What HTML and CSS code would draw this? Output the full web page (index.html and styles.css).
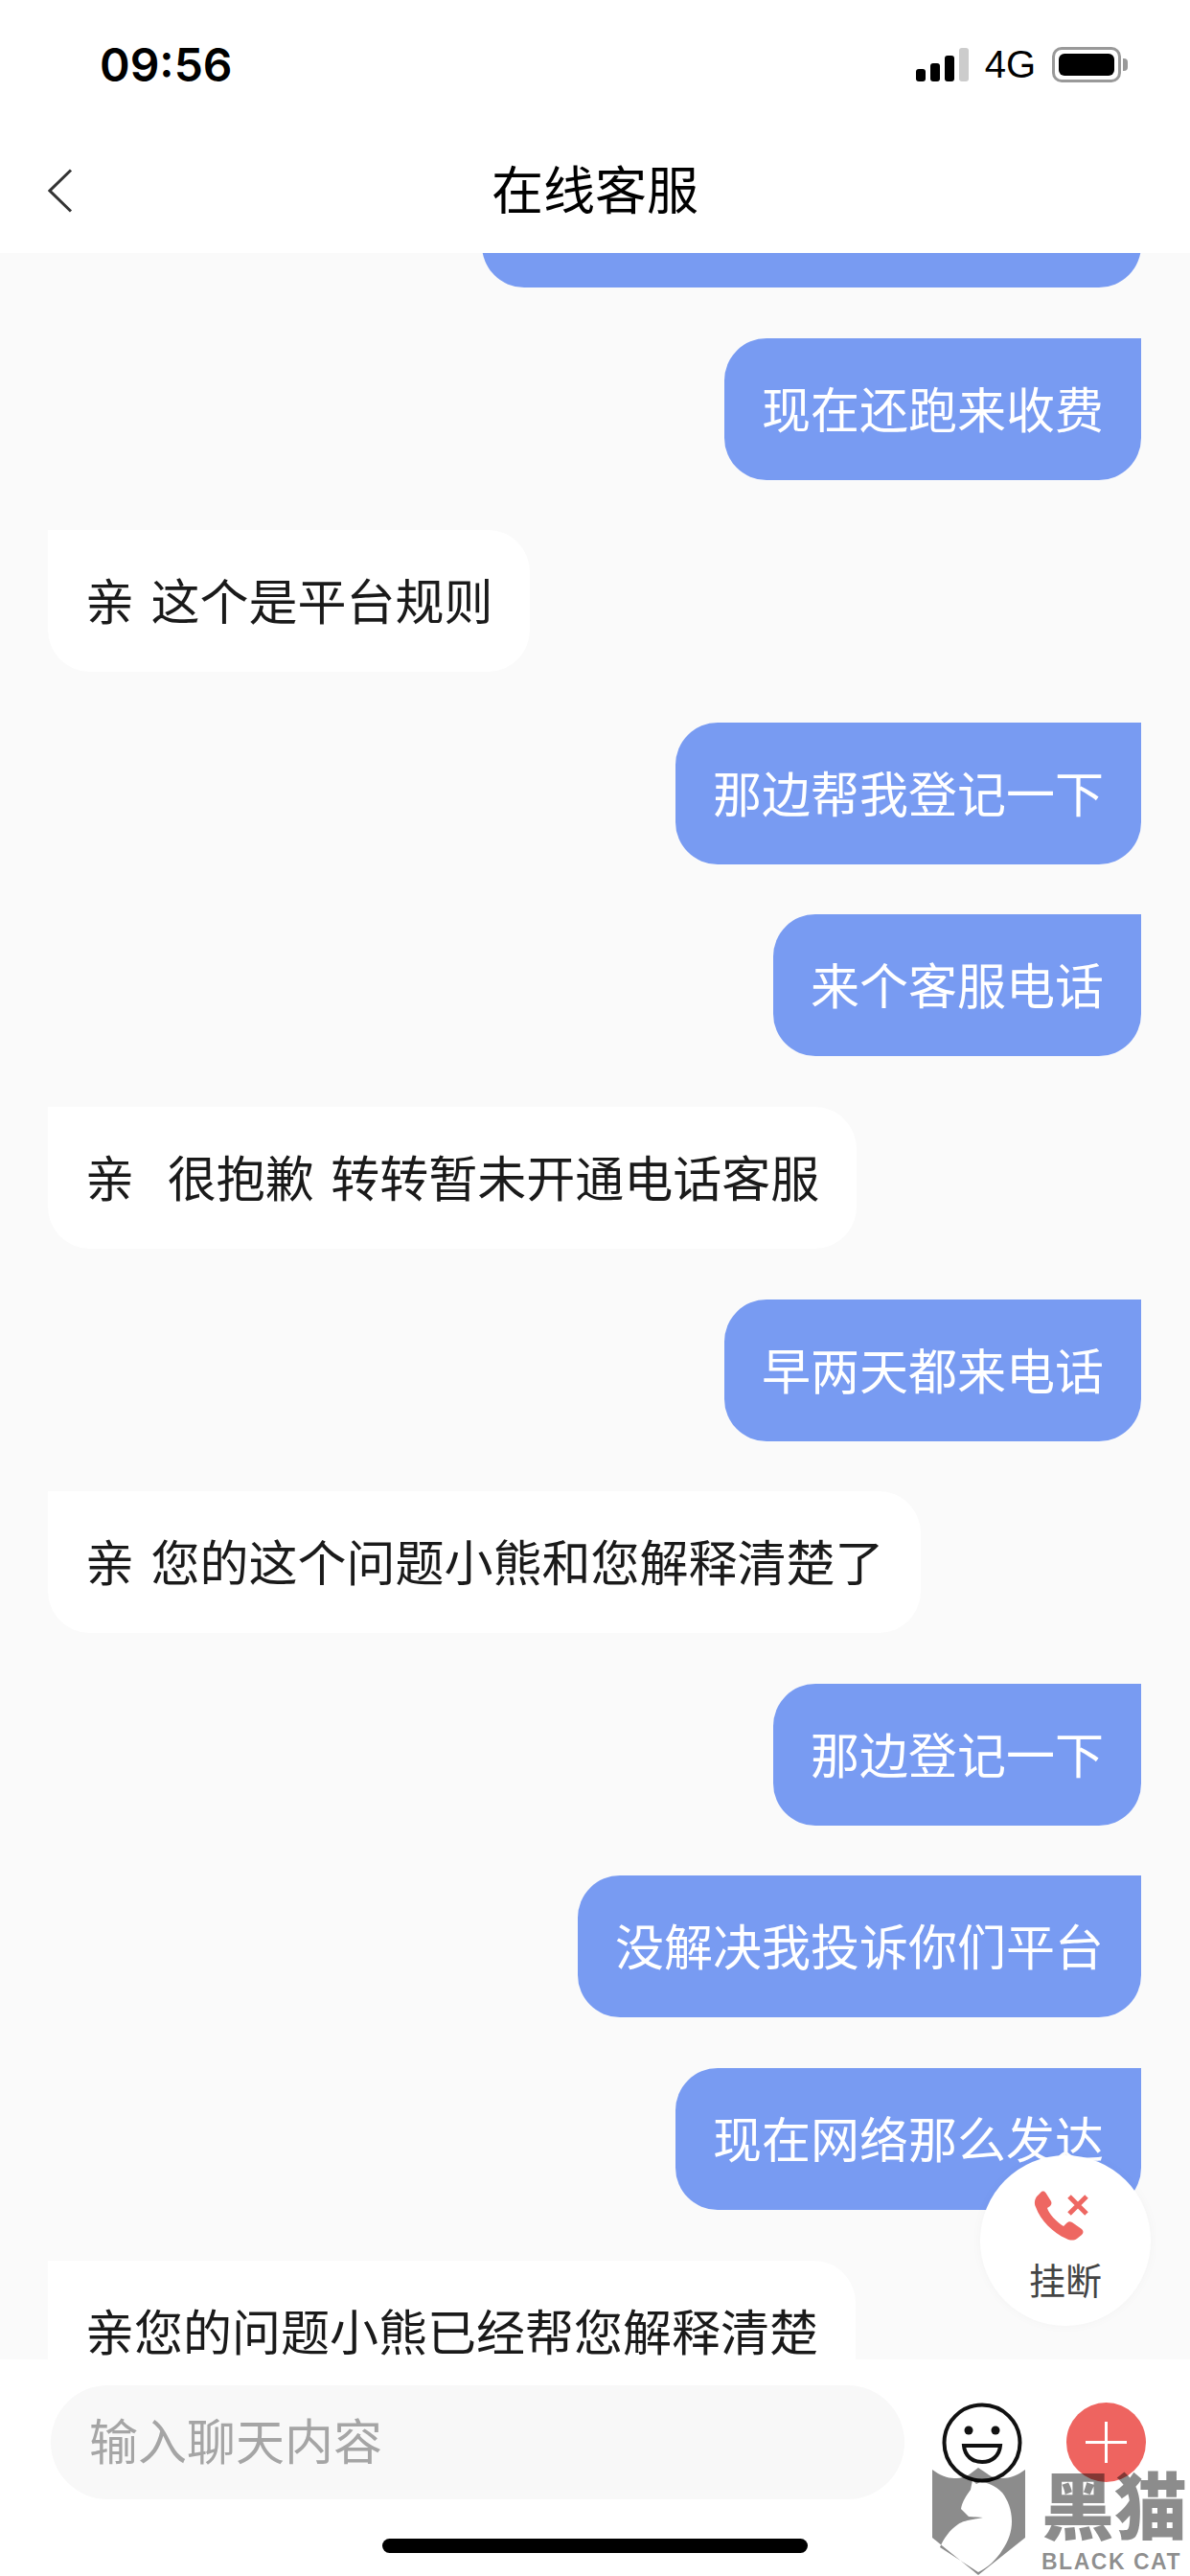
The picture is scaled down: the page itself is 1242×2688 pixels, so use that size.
FILE: index.html
```html
<!DOCTYPE html>
<html lang="zh-CN">
<head>
    <meta charset="UTF-8"/>
    <title>在线客服</title>
    <link rel="stylesheet" href="styles.css">
</head>
<body>
<div class="phone">
    <!-- 状态栏 -->
    <div class="status">
        <span class="time">09:56</span>
        <div class="status-right">
            <div class="signal">
                <i class="bar bar1"></i>
                <i class="bar bar2"></i>
                <i class="bar bar3"></i>
                <i class="bar bar4"></i>
            </div>
            <span class="net">4G</span>
            <div class="battery"><i class="battery-level"></i></div>
            <i class="battery-cap"></i>
        </div>
    </div>

    <!-- 标题栏 -->
    <div class="nav">
        <svg class="back" width="26" height="46" viewBox="0 0 26 46">
            <path d="M24 1.500 L2 23 L24 44.500" fill="none" stroke="#333" stroke-width="3"/>
        </svg>
        <span class="title">在线客服</span>
    </div>

    <!-- 聊天记录 -->
    <div class="chat">
        <div class="msg me cut"></div>
        <div class="msg me">现在还跑来收费</div>
        <div class="msg">亲 这个是平台规则</div>
        <div class="msg me">那边帮我登记一下</div>
        <div class="msg me">来个客服电话</div>
        <div class="msg">亲  很抱歉 转转暂未开通电话客服</div>
        <div class="msg me">早两天都来电话</div>
        <div class="msg">亲 您的这个问题小熊和您解释清楚了</div>
        <div class="msg me">那边登记一下</div>
        <div class="msg me">没解决我投诉你们平台</div>
        <div class="msg me">现在网络那么发达</div>
        <div class="msg">亲您的问题小熊已经帮您解释清楚</div>
    </div>

    <!-- 底部输入 -->
    <div class="footer">
        <div class="input-row">
            <div class="input">输入聊天内容</div>
            <svg class="smile" width="84" height="84" viewBox="0 0 84 84">
                <circle cx="42" cy="42" r="39.500" fill="#fff" stroke="#111" stroke-width="4"/>
                <circle cx="28" cy="29" r="4.500" fill="#111"/>
                <circle cx="56" cy="29" r="4.500" fill="#111"/>
                <path d="M23 45 H61 C60 56 52 62 42 62 C32 62 24 56 23 45 Z" fill="#fff" stroke="#111" stroke-width="4"/>
            </svg>
            <div class="plus"><i class="plus-h"></i><i class="plus-v"></i></div>
        </div>
        <div class="home-bar"></div>
    </div>

    <!-- 挂断按钮 -->
    <div class="hangup">
        <svg class="hangup-icon" width="60" height="60" viewBox="0 0 60 60">
            <path d="M8 2 C10 1 12 2 13 4 L18 12 C19 14 18 16 17 17 L14 19 C15 24 24 34 31 38 L34 35 C36 33 38 33 40 34 L50 41 C52 43 52 45 50 47 L45 51 C42 53 38 53 34 51 C20 45 7 32 2 18 C0 14 1 10 3 7 Z" fill="#ee6762"/>
            <path d="M37 7 L55 25 M55 7 L37 25" stroke="#ee6762" stroke-width="5" fill="none"/>
        </svg>
        <span class="hangup-text">挂断</span>
    </div>

    <!-- 水印 -->
    <div class="mark">
        <svg width="97" height="112" viewBox="0 0 97 112">
            <path fill-rule="evenodd" fill="#000" fill-opacity="0.45" d="M0 2 C8 8 16 11 23 11 C31 11 37 9 40 6 L48 0 L57 6 C60 9 66 11 73 11 C81 11 89 8 97 2 V73 L48 112 L0 73 Z M42 13 L40 23 C35 30 31 36 30 43 L38 51 L53 52 C42 54 32 55 27 59 C18 65 12 74 8 83 L48 109 C58 104 67 96 73 86 C80 76 83 66 83 56 C83 44 79 34 73 26 C66 19 58 15 50 15 L46 17 Z"/>
        </svg>
        <div class="mark-text">
            <span class="mark-cn">黑猫</span>
            <span class="mark-en">BLACK CAT</span>
        </div>
    </div>
</div>
</body>
</html>
```

FILE: styles.css
```css
* {
    box-sizing: border-box;
}

html,
body {
    margin: 0;
    padding: 0;
}

body {
    font-family: "Noto Sans CJK SC", "Noto Sans", sans-serif;
}

.phone {
    position: relative;
    display: flex;
    flex-direction: column;
    width: 1242px;
    height: 2688px;
    overflow: hidden;
    background: #fff;
}

/* 状态栏 */
.status {
    display: flex;
    justify-content: space-between;
    align-items: center;
    flex: none;
    height: 134px;
    padding: 0 65px 0 104px;
}

.time {
    font-family: Inter, "Liberation Sans", sans-serif;
    font-size: 48px;
    font-weight: 600;
    color: #000;
}

.status-right {
    display: flex;
    align-items: center;
}

.signal {
    display: flex;
    align-items: flex-end;
    gap: 5px;
    height: 35px;
}

.bar {
    display: block;
    width: 10px;
    border-radius: 3px;
    background: #000;
}

.bar1 { height: 13px; }
.bar2 { height: 19px; }
.bar3 { height: 27px; }
.bar4 { height: 35px; background: #ccc; }

.net {
    margin-left: 17px;
    font-family: "Liberation Sans", sans-serif;
    font-size: 40px;
    line-height: 40px;
    color: #000;
}

.battery {
    width: 72px;
    height: 37px;
    margin-left: 17px;
    padding: 4px;
    border: 3px solid #999;
    border-radius: 10px;
}

.battery-level {
    display: block;
    width: 100%;
    height: 100%;
    border-radius: 6px;
    background: #000;
}

.battery-cap {
    width: 5px;
    height: 13px;
    margin-left: 2px;
    border-radius: 0 4px 4px 0;
    background: #999;
}

/* 标题栏 */
.nav {
    position: relative;
    display: flex;
    justify-content: center;
    align-items: center;
    flex: none;
    height: 130px;
    padding-bottom: 6px;
}

.back {
    position: absolute;
    left: 50px;
    top: 42px;
}

.title {
    font-size: 54px;
    line-height: 70px;
    color: #000;
}

/* 聊天记录 */
.chat {
    display: flex;
    flex-direction: column;
    align-items: flex-start;
    flex: 1;
    gap: 52.6px;
    padding: 0 51px 0 50px;
    overflow: hidden;
    background: #fafafa;
}

.msg {
    flex: none;
    height: 148px;
    padding: 0 39px;
    border-radius: 0 44px 44px 44px;
    font-size: 51px;
    line-height: 144px;
    word-spacing: 6px;
    white-space: pre;
    color: #1a1a1a;
    background: #fff;
}

.me {
    align-self: flex-end;
    border-radius: 44px 0 44px 44px;
    color: #fff;
    background: #789bf2;
}

.cut {
    width: 688px;
    margin-top: -112px;
    border-radius: 44px;
}

/* 底部输入 */
.footer {
    flex: none;
    height: 226px;
    padding-top: 27px;
    background: #fff;
}

.input-row {
    display: flex;
    align-items: center;
    padding: 0 46px 0 53px;
}

.input {
    width: 891px;
    height: 119px;
    padding-left: 40px;
    border-radius: 60px;
    font-size: 51px;
    line-height: 113px;
    color: #a5a5a5;
    background: #f8f8f8;
}

.smile {
    margin-left: 39px;
}

.plus {
    position: relative;
    width: 83px;
    height: 83px;
    margin-left: 46px;
    border-radius: 50%;
    background: #ee6460;
}

.plus-h,
.plus-v {
    position: absolute;
    background: #fff;
}

.plus-h {
    left: 20px;
    top: 40px;
    width: 43px;
    height: 3px;
}

.plus-v {
    left: 40px;
    top: 20px;
    width: 3px;
    height: 43px;
}

.home-bar {
    width: 444px;
    height: 15px;
    margin: 41px auto 0;
    border-radius: 8px;
    background: #000;
}

/* 挂断按钮 */
.hangup {
    position: absolute;
    left: 1023px;
    top: 2249px;
    display: flex;
    flex-direction: column;
    align-items: center;
    width: 178px;
    height: 178px;
    padding-top: 36px;
    border-radius: 50%;
    background: #fff;
    box-shadow: 0 0 12px rgba(0, 0, 0, 0.03);
}

.hangup-icon {
    margin-right: 6px;
}

.hangup-text {
    margin-top: 7px;
    font-size: 38px;
    line-height: 52px;
    color: #444;
}

/* 水印 */
.mark {
    position: absolute;
    left: 973px;
    top: 2575px;
    display: flex;
    gap: 17px;
}

.mark-text {
    display: flex;
    flex-direction: column;
    align-items: flex-start;
    width: 155px;
}

.mark-cn {
    margin-top: -6px;
    font-size: 76px;
    font-weight: 900;
    line-height: 84px;
    color: rgba(0, 0, 0, 0.45);
}

.mark-en {
    margin-top: 8px;
    font-family: "Liberation Sans", sans-serif;
    font-size: 23px;
    font-weight: 700;
    line-height: 24px;
    letter-spacing: 1.500px;
    white-space: nowrap;
    color: rgba(0, 0, 0, 0.45);
}
```
